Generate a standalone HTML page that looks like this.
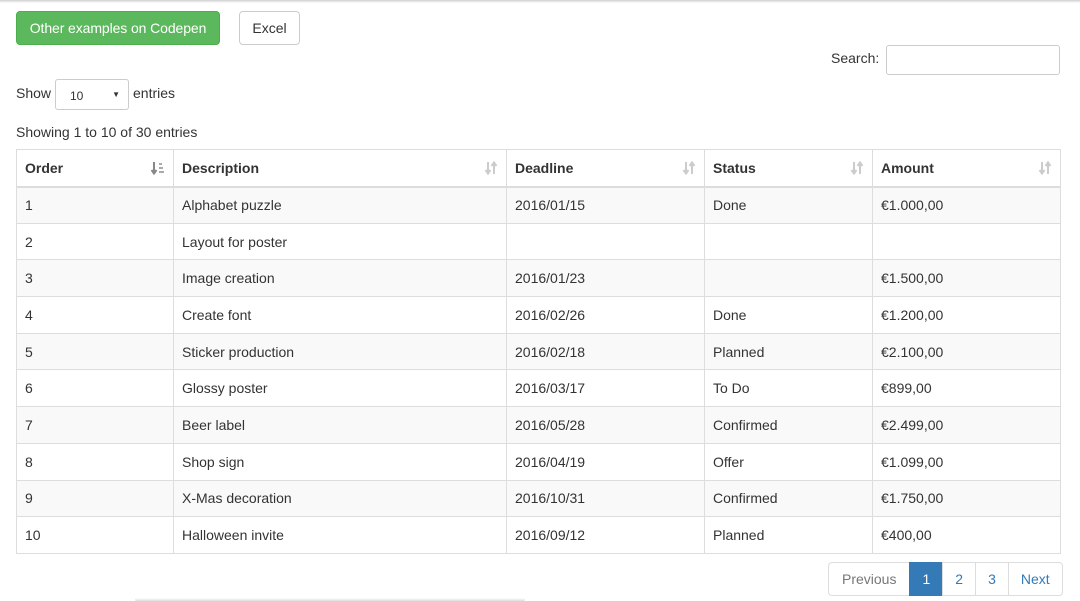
<!DOCTYPE html>
<html><head><style>
*{box-sizing:border-box}
body{margin:0;width:1080px;height:601px;overflow:hidden;background:#fff;font-family:"Liberation Sans",Arial,sans-serif;font-size:14px;color:#333;position:relative}
.topline{position:absolute;left:0;top:0;width:1080px;height:3px;background:linear-gradient(#cfcfcf,#fff)}
.btn{position:absolute;border-radius:4px;font-size:14px;line-height:20px;padding:6px 0;white-space:nowrap}
.green{left:16px;top:11px;width:204px;height:34px;background:#5cb85c;color:#fff;border:1px solid #4cae4c;text-align:center;letter-spacing:-0.1px}
.excel{left:239px;top:11px;width:61px;height:34px;border:1px solid #ccc;background:#fff;text-align:center}
.search{position:absolute;left:831px;top:50px}
.sinput{position:absolute;left:886px;top:45px;width:174px;height:30px;border:1px solid #ccc;border-radius:3px}
.show{position:absolute;left:16px;top:85px}
.sel{position:absolute;left:55px;top:79px;width:74px;height:31px;border:1px solid #ccc;border-radius:3px;font-size:12px;padding:9px 0 0 14px}
.sel span{position:absolute;right:8px;top:10px;font-size:8px}
.ent{position:absolute;left:133px;top:85px}
.info{position:absolute;left:16px;top:124px}
table{position:absolute;left:16px;top:149px;width:1044px;border-collapse:collapse;table-layout:fixed}
td,th{border:1px solid #ddd;padding:0 8px;text-align:left;height:36.7px}
th{height:37px;border-bottom:2px solid #ddd;font-weight:bold;position:relative}
th svg{position:absolute;right:8px;top:11px}
tr:nth-child(odd) td{background:#f9f9f9}
.pag{position:absolute;left:828px;top:562px;height:34px;display:flex;border-radius:4px}
.pag div{border:1px solid #ddd;margin-left:-1px;padding:7px 12px;line-height:18px;color:#337ab7}
.pag .dis{color:#777;border-radius:4px 0 0 4px;margin-left:0;padding:7px 13px}
.pag .act{background:#337ab7;border-color:#337ab7;color:#fff}
.pag .nx{border-radius:0 4px 4px 0}
.shadow{position:absolute;left:135px;top:598px;width:390px;height:3px;background:linear-gradient(#fff,#ddd);border-radius:3px}
</style></head><body>
<div class="topline"></div>
<div class="btn green">Other examples on Codepen</div>
<div class="btn excel">Excel</div>
<div class="search">Search:</div><div class="sinput"></div>
<div class="show">Show</div><div class="sel">10<span>▼</span></div><div class="ent">entries</div>
<div class="info">Showing 1 to 10 of 30 entries</div>
<table>
<colgroup><col style="width:157px"><col style="width:333px"><col style="width:198px"><col style="width:168px"><col style="width:188px"></colgroup>
<thead><tr>
<th>Order<svg width="14" height="14" viewBox="0 0 14 14"><path d="M3 1v11M0.5 9l2.5 3.5 2.5-3.5" stroke="#888" stroke-width="2" fill="none"/><rect x="8" y="2" width="3" height="2" fill="#aaa"/><rect x="8" y="6" width="4" height="2" fill="#aaa"/><rect x="8" y="10" width="5" height="2" fill="#aaa"/></svg></th>
<th>Description<svg width="14" height="14" viewBox="0 0 14 14"><path d="M4 1v11M1.5 9l2.5 3.5 2.5-3.5M10 13V2M7.5 5l2.5-3.5 2.5 3.5" stroke="#ccc" stroke-width="2" fill="none"/></svg></th>
<th>Deadline<svg width="14" height="14" viewBox="0 0 14 14"><path d="M4 1v11M1.5 9l2.5 3.5 2.5-3.5M10 13V2M7.5 5l2.5-3.5 2.5 3.5" stroke="#ccc" stroke-width="2" fill="none"/></svg></th>
<th>Status<svg width="14" height="14" viewBox="0 0 14 14"><path d="M4 1v11M1.5 9l2.5 3.5 2.5-3.5M10 13V2M7.5 5l2.5-3.5 2.5 3.5" stroke="#ccc" stroke-width="2" fill="none"/></svg></th>
<th>Amount<svg width="14" height="14" viewBox="0 0 14 14"><path d="M4 1v11M1.5 9l2.5 3.5 2.5-3.5M10 13V2M7.5 5l2.5-3.5 2.5 3.5" stroke="#ccc" stroke-width="2" fill="none"/></svg></th>
</tr></thead>
<tbody>
<tr><td>1</td><td>Alphabet puzzle</td><td>2016/01/15</td><td>Done</td><td>€1.000,00</td></tr>
<tr><td>2</td><td>Layout for poster</td><td></td><td></td><td></td></tr>
<tr><td>3</td><td>Image creation</td><td>2016/01/23</td><td></td><td>€1.500,00</td></tr>
<tr><td>4</td><td>Create font</td><td>2016/02/26</td><td>Done</td><td>€1.200,00</td></tr>
<tr><td>5</td><td>Sticker production</td><td>2016/02/18</td><td>Planned</td><td>€2.100,00</td></tr>
<tr><td>6</td><td>Glossy poster</td><td>2016/03/17</td><td>To Do</td><td>€899,00</td></tr>
<tr><td>7</td><td>Beer label</td><td>2016/05/28</td><td>Confirmed</td><td>€2.499,00</td></tr>
<tr><td>8</td><td>Shop sign</td><td>2016/04/19</td><td>Offer</td><td>€1.099,00</td></tr>
<tr><td>9</td><td>X-Mas decoration</td><td>2016/10/31</td><td>Confirmed</td><td>€1.750,00</td></tr>
<tr><td>10</td><td>Halloween invite</td><td>2016/09/12</td><td>Planned</td><td>€400,00</td></tr>
</tbody></table>
<div class="pag"><div class="dis">Previous</div><div class="act">1</div><div>2</div><div>3</div><div class="nx">Next</div></div>
<div class="shadow"></div>
</body></html>
